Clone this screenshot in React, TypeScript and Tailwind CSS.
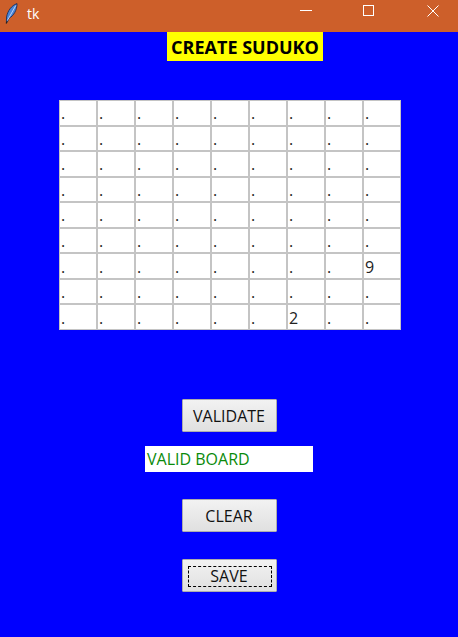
const values: string[][] = Array.from({ length: 9 }, () => Array(9).fill('.'));
values[6][8] = '9';
values[8][6] = '2';

const TitleBar = () => (
    <div className="h-[32px] bg-[#cd5f2a] flex items-start relative text-white">
        <svg className="absolute left-[4px] top-[3px]" width="14" height="21" viewBox="0 0 14 21">
            <path d="M13 0.6 C7.5 2.5 3.5 8 2.6 14 L2.4 18.5 L3.6 18.6 L4.8 15.5 C10 12.5 13 7 13 0.6 Z" fill="#4a86d8" stroke="#1b2f5a" strokeWidth="0.9"/>
            <path d="M11.8 2.5 L3.4 17.5" stroke="#d5e6ff" strokeWidth="0.8"/>
            <path d="M3 18.5 L2.2 20.5" stroke="#222" strokeWidth="1.3"/>
        </svg>
        <span className="absolute left-[27px] top-[3px] text-[14px] font-['Open_Sans']">tk</span>
        <div className="absolute left-[300px] top-[10px] w-[12px] h-[1px] bg-white"/>
        <div className="absolute left-[363px] top-[5px] w-[11px] h-[11px] border border-white"/>
        <svg className="absolute left-[427px] top-[5px]" width="12" height="12" viewBox="0 0 12 12">
            <path d="M0.5 0.5 L11.5 11.5 M11.5 0.5 L0.5 11.5" stroke="white" strokeWidth="1"/>
        </svg>
    </div>
);

const Button = ({ label, focused }: { label: string; focused?: boolean }) => (
    <div className="relative w-[95px] h-[33px] border border-[#adadad] rounded-[1px] bg-gradient-to-b from-[#f2f2f2] to-[#e0e0e0] flex items-center justify-center text-[16px] text-[#111]">
        {focused && <div className="absolute left-[5px] right-[4px] top-[6px] bottom-[4px] border border-dashed border-black"/>}
        <span className="relative">{label}</span>
    </div>
);

export default function App() {
    return (
        <div className="w-[458px] h-[637px] flex flex-col bg-[#0000ff] font-['Open_Sans'] overflow-hidden">
            <TitleBar/>
            <div className="flex flex-col items-center">
                <div className="ml-[32px] w-[156px] h-[29px] bg-[#ffff00] flex items-center justify-center text-[18px] font-bold text-black leading-none">
                    CREATE SUDUKO
                </div>

                <div className="mt-[39px] ml-[2px] grid grid-cols-9 grid-rows-9 w-[342px] h-[230px] bg-white">
                    {values.map((row, r) =>
                        row.map((v, c) => (
                            <div key={`${r}-${c}`} className="border border-[#c4c4c4] bg-white flex items-center pl-[1px] text-[16px] text-[#222] leading-none pt-[1px]">
                                {v}
                            </div>
                        ))
                    )}
                </div>

                <div className="mt-[69px]"><Button label="VALIDATE"/></div>

                <div className="mt-[14px] w-[168px] h-[26px] bg-white flex items-center pl-[2px] text-[16px] text-[#0a8a0a]">
                    VALID BOARD
                </div>

                <div className="mt-[27px]"><Button label="CLEAR"/></div>
                <div className="mt-[27px]"><Button label="SAVE" focused/></div>
            </div>
        </div>
    );
}
